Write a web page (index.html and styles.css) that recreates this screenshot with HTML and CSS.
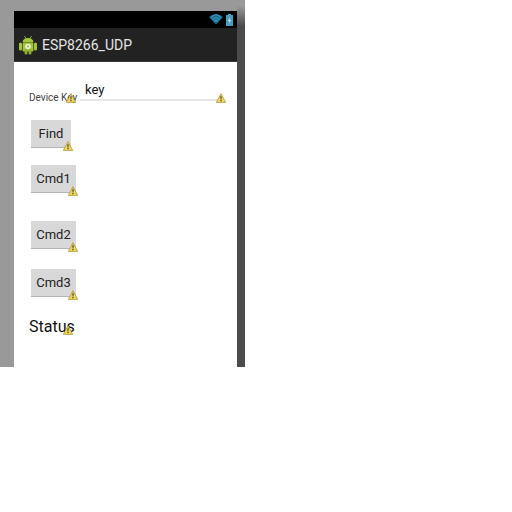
FILE: index.html
```html
<!DOCTYPE html>
<html lang="en">
<head>
<meta charset="UTF-8" />
<title>ESP8266_UDP</title>
<link rel="stylesheet" href="styles.css">
</head>
<body>

<svg class="defs" width="0" height="0">
  <symbol id="warn" viewBox="0 0 10 10">
    <path d="M5 .6 9.700 9.400H.3Z" fill="#f0d860" stroke="#a88f30" stroke-width=".7" stroke-linejoin="round"/>
    <path d="M4.400 3.200h1.200l-.2 3.400h-.8Z" fill="#3a3320"/>
    <rect x="4.400" y="7.100" width="1.200" height="1.100" fill="#3a3320"/>
  </symbol>
</svg>

<div class="device">
  <div class="screen">
    <div class="status-bar">
      <svg class="wifi" width="14" height="11" viewBox="0 0 14 11">
        <path d="M7 10.600 .2 3.200C4-.6 10-.6 13.800 3.200Z" fill="#1a6f92"/>
        <path d="M1.800 3.600C5 0 9 0 12.200 3.600M3.400 5.500C5.500 3.400 8.500 3.400 10.600 5.500M5 7.300C6.200 6.300 7.800 6.300 9 7.300" fill="none" stroke="#3aa9d0" stroke-width="1"/>
      </svg>
      <svg class="battery" width="7" height="12" viewBox="0 0 7 12">
        <rect x="2" y="0" width="3" height="2" fill="#5fa9c4"/>
        <rect x="0" y="1" width="7" height="11" fill="#4a9cbc"/>
        <path d="M4 3 2 7h1.500L3 10l2-4H3.500Z" fill="#d8eef6"/>
      </svg>
    </div>
    <div class="action-bar">
      <svg class="logo" width="18" height="20" viewBox="0 0 18 20">
        <path d="M5.500 1 7 3.500M12.500 1 11 3.500" stroke="#a4c639" stroke-width=".8"/>
        <path d="M3.600 7.200C3.600 1.600 14.400 1.600 14.400 7.200Z" fill="#a4c639"/>
        <rect x="3.600" y="7.600" width="10.800" height="8.800" rx="1.200" fill="#a4c639"/>
        <rect x="5.600" y="14" width="2.800" height="5.600" rx="1.300" fill="#8fb02e"/>
        <rect x="9.600" y="14" width="2.800" height="5.600" rx="1.300" fill="#8fb02e"/>
        <rect x="0" y="7.400" width="3" height="8" rx="1.500" fill="#a4c639"/>
        <rect x="15" y="7.400" width="3" height="8" rx="1.500" fill="#a4c639"/>
        <circle cx="9" cy="11.500" r="2.800" fill="#e9eed2"/>
        <circle cx="9" cy="11.500" r=".9" fill="#8fb02e"/>
      </svg>
      <span class="app-title">ESP8266_UDP</span>
    </div>
    <div class="content">
      <div class="key-row">
        <span class="key-label">Device Key<svg class="warn warn-label"><use href="#warn"/></svg></span>
        <div class="key-input">key<svg class="warn warn-input"><use href="#warn"/></svg></div>
      </div>
      <button class="btn btn-find">Find<svg class="warn"><use href="#warn"/></svg></button>
      <button class="btn btn-cmd1">Cmd1<svg class="warn"><use href="#warn"/></svg></button>
      <button class="btn btn-cmd2">Cmd2<svg class="warn"><use href="#warn"/></svg></button>
      <button class="btn btn-cmd3">Cmd3<svg class="warn"><use href="#warn"/></svg></button>
      <div class="status-text">Status<svg class="warn warn-status"><use href="#warn"/></svg></div>
    </div>
  </div>
</div>

</body>
</html>
```

FILE: styles.css
```css
html, body {
  margin: 0;
  padding: 0;
  background: #fff;
}
.defs {
  position: absolute;
}
.device {
  width: 245px;
  height: 367px;
  box-sizing: border-box;
  padding: 11px 0 0 14px;
  background: linear-gradient(#999 6px, #4b4b4b 26px) right / 8px 100% no-repeat, #999;
  overflow: hidden;
}
.screen {
  width: 223px;
  height: 356px;
  display: flex;
  flex-direction: column;
  background: #fff;
}
.status-bar {
  height: 17px;
  flex: none;
  background: #000;
  display: flex;
  justify-content: flex-end;
  align-items: center;
  gap: 3px;
  padding-right: 4px;
}
.action-bar {
  height: 33px;
  flex: none;
  background: #222;
  border-bottom: 1px solid #3a3a3a;
  display: flex;
  align-items: center;
  gap: 5px;
  padding-left: 5px;
}
.app-title {
  font-family: Roboto, sans-serif;
  font-size: 14px;
  color: #e4e4e4;
}
.content {
  flex: 1;
  padding: 0 15px;
  display: flex;
  flex-direction: column;
  align-items: flex-start;
  font-family: Roboto, sans-serif;
  color: #111;
}
.key-row {
  display: flex;
  align-items: flex-end;
  margin: 19px 0 0;
  height: 20px;
}
.key-label {
  position: relative;
  font-size: 10px;
  line-height: 12px;
  color: #444;
  margin-bottom: -3px;
  width: 51px;
}
.key-input {
  position: relative;
  width: 142px;
  height: 18px;
  box-sizing: border-box;
  padding-left: 5px;
  font-size: 13px;
  line-height: 13px;
  border-bottom: 2px solid #e6e6e6;
}
.btn {
  position: relative;
  display: block;
  height: 28px;
  margin: 0 0 0 2px;
  padding: 0;
  border: none;
  border-bottom: 1px solid #b4b4b4;
  background: #d8d8d8;
  font-family: Roboto, sans-serif;
  font-size: 13px;
  color: #222;
}
.btn-find { width: 40px; margin-top: 19px; }
.btn-cmd1 { width: 45px; margin-top: 17px; }
.btn-cmd2 { width: 45px; margin-top: 28px; }
.btn-cmd3 { width: 45px; margin-top: 20px; }
.status-text {
  position: relative;
  font-size: 16px;
  line-height: 19px;
  margin-top: 20px;
}
.warn {
  position: absolute;
  width: 10px;
  height: 10px;
  right: -2px;
  bottom: -4px;
}
.warn-label {
  right: auto;
  left: 37px;
  bottom: 1px;
}
.warn-input {
  right: -4px;
  bottom: -4px;
}
.warn-status {
  right: auto;
  left: 34px;
  bottom: 1px;
}
```
